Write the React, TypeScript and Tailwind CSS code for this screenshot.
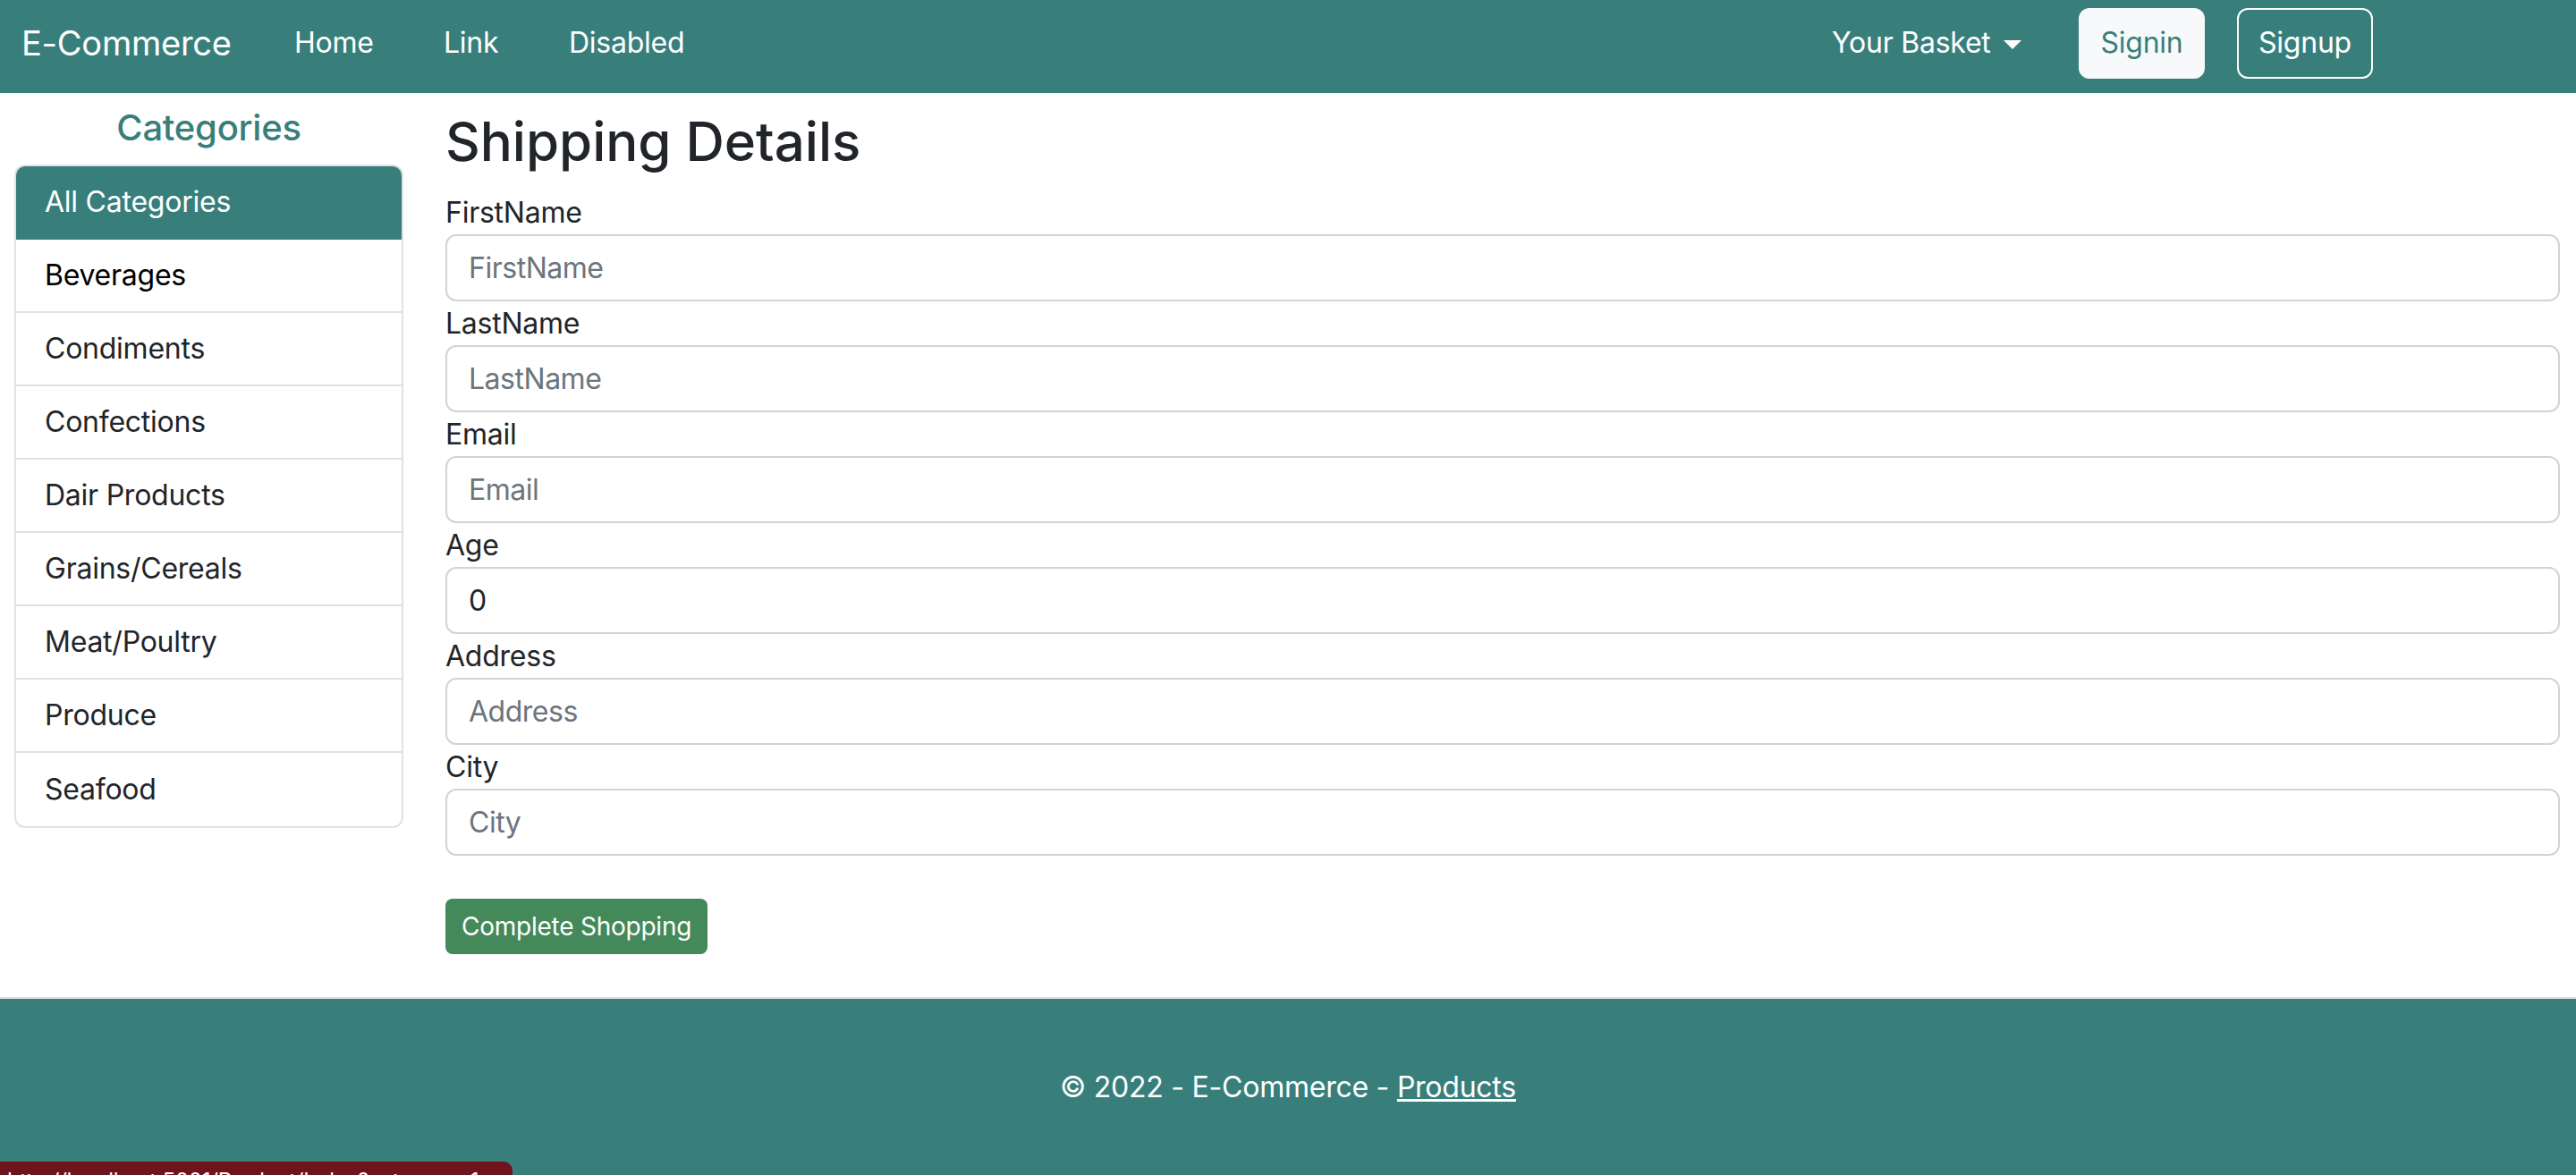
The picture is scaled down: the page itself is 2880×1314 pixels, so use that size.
import React from 'react';

const categories = [
  'Beverages',
  'Condiments',
  'Confections',
  'Dair Products',
  'Grains/Cereals',
  'Meat/Poultry',
  'Produce',
  'Seafood',
];

const fields = [
  { label: 'FirstName', placeholder: 'FirstName' },
  { label: 'LastName', placeholder: 'LastName' },
  { label: 'Email', placeholder: 'Email' },
  { label: 'Age', value: '0' },
  { label: 'Address', placeholder: 'Address' },
  { label: 'City', placeholder: 'City' },
];

function Navbar() {
  return (
    <nav className="flex h-[104px] shrink-0 items-center bg-[#387f7c] pb-[8px] pl-[24px] pr-[227px] text-white">
      <a href="#" className="w-[305px] text-[38px] leading-[57px]">E-Commerce</a>
      <a href="#" className="w-[167px] text-[32px] leading-[48px]">Home</a>
      <a href="#" className="w-[140px] text-[32px] leading-[48px]">Link</a>
      <a href="#" className="text-[32px] leading-[48px]">Disabled</a>
      <div className="ml-auto flex items-center">
        <div className="flex w-[276px] items-center text-[32px] leading-[48px]">
          <span>Your Basket</span>
          <span className="ml-[14px] mt-[4px] h-0 w-0 border-x-[10px] border-t-[10px] border-x-transparent border-t-white" />
        </div>
        <button type="button" className="mr-[36px] h-[79px] w-[141px] rounded-[12px] bg-[#f8f9fa] text-[32px] text-[#387f7c]">
          Signin
        </button>
        <button type="button" className="h-[79px] w-[152px] rounded-[12px] border-2 border-white text-[32px] text-white">
          Signup
        </button>
      </div>
    </nav>
  );
}

function Sidebar() {
  return (
    <aside className="w-[435px] shrink-0 pt-[15px]">
      <h5 className="mb-[17px] text-center text-[40px] font-medium leading-[48px] text-[#387f7c]">Categories</h5>
      <div className="overflow-hidden rounded-[12px] border-2 border-[#dee2e6]">
        <a href="#" className="-mx-[2px] -mt-[2px] flex h-[84px] items-center bg-[#387f7c] pl-[34px] text-[32px] text-white">
          All Categories
        </a>
        {categories.map((c, i) => (
          <a
            key={c}
            href="#"
            className={`flex h-[82px] items-center pl-[32px] text-[32px] ${i === 0 ? 'text-black' : 'text-[#212529]'} ${i < categories.length - 1 ? 'border-b-2 border-[#dee2e6]' : ''}`}
          >
            {c}
          </a>
        ))}
      </div>
    </aside>
  );
}

function ShippingForm() {
  return (
    <main className="flex-1 pb-[48px] pt-[18px]">
      <h2 className="mb-[19px] text-[60px] font-medium leading-[72px] tracking-normal text-[#212529]">Shipping Details</h2>
      {fields.map((f) => (
        <div key={f.label}>
          <label className="block text-[32px] leading-[49px] text-[#212529]">{f.label}</label>
          <input
            className="block h-[75px] w-full rounded-[12px] border-2 border-[#ced4da] bg-white px-[24px] text-[32px] tracking-[-0.015em] text-[#212529] outline-none placeholder:text-[#6c757d]"
            placeholder={f.placeholder}
            defaultValue={f.value}
          />
        </div>
      ))}
      <button type="button" className="mt-[48px] h-[62px] rounded-[8px] bg-[#438959] px-[18px] text-[28px] text-white">
        Complete Shopping
      </button>
    </main>
  );
}

export default function App() {
  return (
    <div className="relative flex min-h-screen flex-col bg-white font-['Inter','Liberation_Sans',sans-serif] tracking-[-0.015em]">
      <Navbar />
      <div className="flex flex-1 gap-[47px] pl-[16px] pr-[18px]">
        <Sidebar />
        <ShippingForm />
      </div>
      <footer className="flex h-[199px] shrink-0 items-center justify-center border-t-2 border-[#dee2e6] bg-[#387f7c] text-[32px] text-white">
        <span>
          © 2022 - E-Commerce - <a href="#" className="underline">Products</a>
        </span>
      </footer>
      <div className="fixed bottom-0 left-0 h-[15px] w-[573px] overflow-hidden rounded-tr-[10px] bg-[#6e141c] pl-[8px] pt-[10px] text-[24px] leading-none text-white">
        http://localhost:5001/Product/Index?category=1
      </div>
    </div>
  );
}
